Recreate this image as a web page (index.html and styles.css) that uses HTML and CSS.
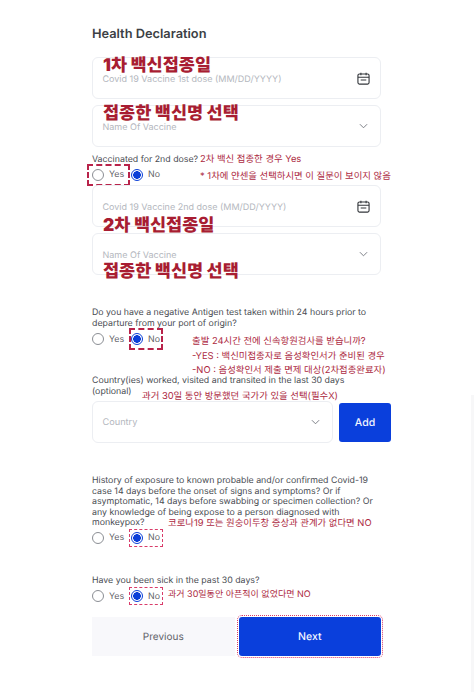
FILE: index.html
```html
<!DOCTYPE html>
<html lang="ko">
<head>
    <meta charset="UTF-8">
    <meta name="viewport" content="width=device-width, initial-scale=1.0">
    <title>Health Declaration</title>
    <link rel="stylesheet" href="styles.css">
</head>
<body>
    <div class="side-panel"></div>
    <form class="declaration">
        <h1 class="title">Health Declaration</h1>

        <div class="field field-first">
            <span class="note-big note-top">1차 백신접종일</span>
            <span class="placeholder">Covid 19 Vaccine 1st dose (MM/DD/YYYY)</span>
            <svg class="icon-calendar" viewBox="0 0 14 14"><rect x="1" y="2.2" width="12" height="10.8" rx="1.6"/><path d="M1 5.6h12M4.2 .8v2.6M9.8 .8v2.6M4 8.6h6"/></svg>
        </div>
        <div class="field">
            <span class="note-big note-top">접종한 백신명 선택</span>
            <span class="placeholder">Name Of Vaccine</span>
            <svg class="icon-chevron" viewBox="0 0 10 6"><path d="M1 1l4 4 4-4"/></svg>
        </div>

        <div class="question question-second">
            <p>Vaccinated for 2nd dose?</p>
            <span class="note-hand note-second">2차 백신 접종한 경우 Yes</span>
            <div class="options options-second">
                <label class="option mark-thick mark-wide"><input type="radio" name="second">Yes</label>
                <label class="option"><input type="radio" name="second" checked>No</label>
            </div>
            <span class="note-hand note-janssen">* 1차에 얀센을 선택하시면 이 질문이 보이지 않음</span>
        </div>

        <div class="field field-third">
            <span class="placeholder">Covid 19 Vaccine 2nd dose (MM/DD/YYYY)</span>
            <svg class="icon-calendar" viewBox="0 0 14 14"><rect x="1" y="2.2" width="12" height="10.8" rx="1.6"/><path d="M1 5.6h12M4.2 .8v2.6M9.8 .8v2.6M4 8.6h6"/></svg>
            <span class="note-big note-bottom">2차 백신접종일</span>
        </div>
        <div class="field">
            <span class="placeholder">Name Of Vaccine</span>
            <svg class="icon-chevron" viewBox="0 0 10 6"><path d="M1 1l4 4 4-4"/></svg>
            <span class="note-big note-bottom">접종한 백신명 선택</span>
        </div>

        <div class="question question-antigen">
            <p>Do you have a negative Antigen test taken within 24 hours prior to departure from your port of origin?</p>
            <div class="options">
                <label class="option"><input type="radio" name="antigen">Yes</label>
                <label class="option mark-thick"><input type="radio" name="antigen" checked>No</label>
            </div>
            <div class="note-hand note-antigen">
                <div>출발 24시간 전에 신속항원검사를 받습니까?</div>
                <div>-YES : 백신미접종자로 음성확인서가 준비된 경우</div>
                <div>-NO : 음성확인서 제출 면제 대상(2차접종완료자)</div>
            </div>
        </div>

        <div class="question question-country">
            <p>Country(ies) worked, visited and transited in the last 30 days (optional)</p>
            <span class="note-hand note-country">과거 30일 동안 방문했던 국가가 있을 선택(필수X)</span>
            <div class="country-row">
                <div class="field field-country">
                    <span class="placeholder placeholder-large">Country</span>
                    <svg class="icon-chevron" viewBox="0 0 10 6"><path d="M1 1l4 4 4-4"/></svg>
                </div>
                <button type="button" class="add-button">Add</button>
            </div>
        </div>

        <div class="question question-history">
            <p>History of exposure to known probable and/or confirmed Covid-19 case 14 days before the onset of signs and symptoms? Or if asymptomatic, 14 days before swabbing or specimen collection? Or any knowledge of being expose to a person diagnosed with monkeypox?</p>
            <span class="note-hand note-history">코로나19 또는 원숭이두창 증상과 관계가 없다면 NO</span>
            <div class="options options-tight">
                <label class="option"><input type="radio" name="history">Yes</label>
                <label class="option mark-thin"><input type="radio" name="history" checked>No</label>
            </div>
        </div>

        <div class="question question-sick">
            <p>Have you been sick in the past 30 days?</p>
            <div class="options">
                <label class="option"><input type="radio" name="sick">Yes</label>
                <label class="option mark-thin"><input type="radio" name="sick" checked>No</label>
            </div>
            <span class="note-hand note-sick">과거 30일동안 아픈적이 없었다면 NO</span>
        </div>

        <div class="actions">
            <button type="button" class="prev-button">Previous</button>
            <button type="button" class="next-button">Next</button>
        </div>
    </form>
</body>
</html>
```

FILE: styles.css
```css
* {
    margin: 0;
    padding: 0;
    box-sizing: border-box;
    font-family: Inter, "Noto Sans CJK KR", sans-serif;
    text-rendering: geometricPrecision;
}

body {
    background-color: #fff;
    height: 692px;
    overflow: hidden;
    position: relative;
}

.side-panel {
    position: absolute;
    left: 471px;
    top: 395px;
    width: 3px;
    height: 297px;
    background-color: #f7f7f8;
}

.declaration {
    width: 289px;
    margin-left: 92px;
    padding-top: 27px;
}

.title {
    font-size: 12.8px;
    line-height: 16px;
    font-weight: 600;
    color: #3c3f45;
}

.field {
    position: relative;
    height: 42px;
    margin-top: 6px;
    display: flex;
    align-items: center;
    justify-content: space-between;
    padding: 0 10px 0 9.5px;
    background-color: #fff;
    border: 1px solid #eceef2;
    border-radius: 6px;
}

.field-first {
    margin-top: 14px;
}

.field-third {
    margin-top: 5px;
}

.placeholder {
    font-size: 9px;
    color: #b4b7be;
    padding-top: 3px;
}

.placeholder-large {
    font-size: 9.2px;
    padding-top: 0;
}

.icon-calendar {
    width: 13px;
    height: 13px;
    fill: none;
    stroke: #33363b;
    stroke-width: 1.2;
}

.icon-chevron {
    width: 9px;
    height: 6px;
    margin-right: 2px;
    fill: none;
    stroke: #6f737a;
    stroke-width: 1;
}

.question {
    position: relative;
}

.question p {
    font-size: 8.8px;
    line-height: 10.5px;
    color: #4a4d53;
}

.question-second {
    margin-top: 8px;
    height: 25px;
}

.question-antigen {
    margin-top: 33px;
}

.question-country {
    margin-top: 31px;
}

.question-history {
    margin-top: 33px;
}

.question-sick {
    margin-top: 32px;
}

.options {
    display: flex;
    gap: 7px;
    margin-top: 4px;
}

.options-second {
    margin-top: 3px;
}

.options-tight {
    margin-top: 3px;
}

.option {
    position: relative;
    display: flex;
    align-items: center;
    gap: 5px;
    height: 12px;
    font-size: 8.8px;
    color: #5f6268;
}

.option input {
    appearance: none;
    width: 12px;
    height: 12px;
    border: 1px solid #8b8e94;
    border-radius: 50%;
    background-color: #fff;
}

.option input:checked {
    border-color: #0b3fd8;
    background: radial-gradient(circle, #0b3fd8 0 3.6px, #fff 4px);
}

.mark-thick::after,
.mark-thin::after {
    content: "";
    position: absolute;
}

.mark-thick::after {
    inset: -5px -3px -5px -2px;
    border: 2px dashed #b8234a;
}

.mark-wide::after {
    inset: -5px -6px -5px -5px;
}

.mark-thin::after {
    inset: -3px -3px -3px -2px;
    border: 1px dashed #d93c6a;
}

.country-row {
    display: flex;
    align-items: center;
    gap: 6px;
    width: 299px;
    margin-top: 4px;
}

.field-country {
    width: 241px;
    margin-top: 0;
}

.add-button,
.next-button {
    background-color: #0a3fdc;
    color: #f2f5ff;
    border: none;
    border-radius: 3px;
    font-size: 10.5px;
    font-weight: 500;
}

.add-button {
    width: 52px;
    height: 39px;
}

.actions {
    display: flex;
    gap: 4px;
    margin-top: 15px;
}

.prev-button,
.next-button {
    flex: 1;
    height: 39px;
}

.prev-button {
    background-color: #f8f8fb;
    color: #5f6268;
    border: none;
    font-size: 10px;
    font-weight: 400;
}

.next-button {
    outline: 1px dotted #d93c6a;
    outline-offset: 1px;
}

/* annotations drawn on top of the form */
.note-big {
    position: absolute;
    left: 10px;
    font-size: 17.5px;
    line-height: 18px;
    font-weight: 900;
    color: #a81d32;
    white-space: nowrap;
}

.note-top {
    top: -1px;
}

.note-bottom {
    bottom: -7px;
}

.field-third .note-bottom {
    bottom: -9px;
}

.note-hand {
    position: absolute;
    font-size: 9.4px;
    line-height: 14.5px;
    color: #ad2a42;
    white-space: nowrap;
}

.note-second {
    left: 108px;
    top: -2px;
}

.note-janssen {
    left: 108px;
    top: 15px;
}

.note-antigen {
    left: 100px;
    top: 27px;
}

.note-country {
    left: 50px;
    top: 14px;
}

.note-history {
    left: 76px;
    top: 41px;
}

.note-sick {
    left: 76px;
    top: 12px;
    font-size: 9px;
}
```
